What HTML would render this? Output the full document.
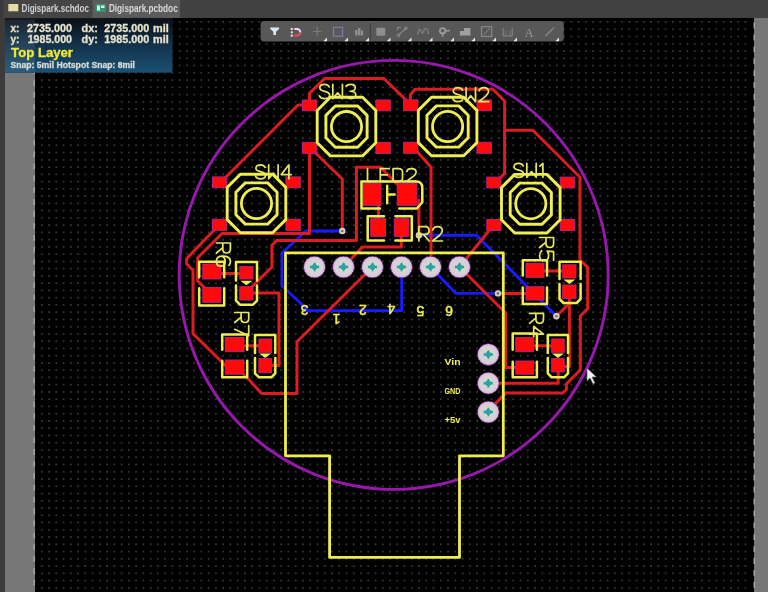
<!DOCTYPE html>
<html><head><meta charset="utf-8">
<style>
html,body{margin:0;padding:0;width:768px;height:592px;overflow:hidden;background:#000;}
svg{position:absolute;left:0;top:0;filter:blur(0.45px);}
text{font-family:"Liberation Sans",sans-serif;}
</style></head><body>
<svg width="768" height="592" viewBox="0 0 768 592">
  <defs>
    <pattern id="dots" patternUnits="userSpaceOnUse" x="38.17" y="18.37" width="7.254" height="7.254">
      <rect x="2.8" y="2.8" width="1.7" height="1.7" fill="#3a3a3a"/>
    </pattern>
    <linearGradient id="ig" x1="0" y1="0" x2="0" y2="1">
      <stop offset="0" stop-color="#0a0f16"/>
      <stop offset="0.45" stop-color="#123048"/>
      <stop offset="1" stop-color="#1c5072"/>
    </linearGradient>
  </defs>
  <!-- top bar -->
  <rect x="0" y="0" width="768" height="18" fill="#414141"/>
  <rect x="0" y="0" width="92" height="18" fill="#454545"/>
  <rect x="92.5" y="0" width="87.5" height="17.8" fill="#5c5c5c"/>
  <rect x="0" y="0" width="3.5" height="18" fill="#3a3a3a"/>
  <rect x="8.3" y="4" width="10" height="7.3" fill="#e8dca4"/>
  <rect x="95.6" y="4" width="10.2" height="8" fill="#2f9670"/>
  <rect x="97" y="5.5" width="3" height="5" fill="#d8efe4"/>
  <rect x="101" y="5.5" width="3.5" height="2.5" fill="#d8efe4"/>
  <text x="21.6" y="11.5" font-size="10.5" font-weight="700" fill="#d0d0d0" textLength="67.4" lengthAdjust="spacingAndGlyphs">Digispark.schdoc</text>
  <text x="108.9" y="11.5" font-size="10.5" font-weight="700" fill="#dadada" textLength="68.8" lengthAdjust="spacingAndGlyphs">Digispark.pcbdoc</text>
  <!-- strips -->
  <rect x="0" y="18" width="5" height="574" fill="#3b3b3b"/>
  <rect x="5" y="18" width="30" height="574" fill="#777"/>
  <rect x="754" y="18" width="14" height="574" fill="#777"/>
  <!-- canvas -->
  <rect x="35" y="18" width="719" height="574" fill="#000"/>
  <rect x="35" y="18" width="715" height="574" fill="url(#dots)"/>
  <line x1="34.2" y1="18" x2="34.2" y2="592" stroke="#a4a4a4" stroke-width="1.6" stroke-dasharray="5.8 6.1" stroke-dashoffset="-2.7"/>
  <line x1="754.3" y1="18" x2="754.3" y2="592" stroke="#a4a4a4" stroke-width="1.6" stroke-dasharray="5.8 6.1" stroke-dashoffset="-4.6"/>
  <g id="pcb">
<circle cx="393.7" cy="274.9" r="214.5" fill="none" stroke="#9818ae" stroke-width="2.9"/>
<path d="M342.3,231.0 L306.0,231.0 L282.0,253.0 L282.0,286.0 L302.5,305.0 L307.0,310.6 L401.7,310.6 L401.7,270.0" fill="none" stroke="#1a1aff" stroke-width="2.9" stroke-linejoin="round" stroke-linecap="round"/>
<path d="M418.9,235.2 L476.5,235.2 L556.4,316.2" fill="none" stroke="#1a1aff" stroke-width="2.9" stroke-linejoin="round" stroke-linecap="round"/>
<path d="M430.5,267.0 L456.0,293.4 L498.0,293.4" fill="none" stroke="#1a1aff" stroke-width="2.9" stroke-linejoin="round" stroke-linecap="round"/>
<path d="M309.5,100.0 L309.5,93.4 L324.5,78.5 L383.9,78.5 L407.0,101.0" fill="none" stroke="#dc1c20" stroke-width="3.0" stroke-linejoin="round" stroke-linecap="round"/>
<path d="M303.0,105.0 L298.0,105.0 L226.0,177.0 L220.0,182.0" fill="none" stroke="#dc1c20" stroke-width="3.0" stroke-linejoin="round" stroke-linecap="round"/>
<path d="M410.3,102.0 L410.3,95.0 L415.0,89.3 L492.8,89.3 L504.6,101.0 L504.6,173.4 L497.0,181.0" fill="none" stroke="#dc1c20" stroke-width="3.0" stroke-linejoin="round" stroke-linecap="round"/>
<path d="M504.6,130.2 L532.9,130.2 L580.0,177.3 L580.0,260.0 L587.7,267.2 L587.7,308.6 L580.3,316.0 L580.3,370.0 L566.4,383.9 L566.4,389.5 L563.0,392.9 L506.0,392.9 L494.0,405.0" fill="none" stroke="#dc1c20" stroke-width="3.0" stroke-linejoin="round" stroke-linecap="round"/>
<path d="M493.7,225.0 L459.5,267.0" fill="none" stroke="#dc1c20" stroke-width="3.0" stroke-linejoin="round" stroke-linecap="round"/>
<path d="M459.5,267.0 L501.6,309.0 L505.6,313.0 L505.6,367.5 L520.0,367.5" fill="none" stroke="#dc1c20" stroke-width="3.0" stroke-linejoin="round" stroke-linecap="round"/>
<path d="M498.0,293.4 L530.0,293.4" fill="none" stroke="#dc1c20" stroke-width="3.0" stroke-linejoin="round" stroke-linecap="round"/>
<path d="M540.0,271.0 L566.0,271.0" fill="none" stroke="#dc1c20" stroke-width="3.0" stroke-linejoin="round" stroke-linecap="round"/>
<path d="M530.0,345.8 L556.0,345.8" fill="none" stroke="#dc1c20" stroke-width="3.0" stroke-linejoin="round" stroke-linecap="round"/>
<path d="M569.4,292.0 L569.4,303.2 L556.4,316.2" fill="none" stroke="#dc1c20" stroke-width="3.0" stroke-linejoin="round" stroke-linecap="round"/>
<path d="M569.4,303.2 L569.4,366.4 L562.0,366.4" fill="none" stroke="#dc1c20" stroke-width="3.0" stroke-linejoin="round" stroke-linecap="round"/>
<path d="M558.2,366.0 L558.2,383.3 L488.3,383.3" fill="none" stroke="#dc1c20" stroke-width="3.0" stroke-linejoin="round" stroke-linecap="round"/>
<path d="M418.9,200.0 L418.9,235.2" fill="none" stroke="#dc1c20" stroke-width="3.0" stroke-linejoin="round" stroke-linecap="round"/>
<path d="M405.0,192.0 L380.4,167.2 L356.4,167.2 L356.4,240.6 L276.6,240.6 L271.9,245.3 L271.9,267.0 L250.0,289.0" fill="none" stroke="#dc1c20" stroke-width="3.0" stroke-linejoin="round" stroke-linecap="round"/>
<path d="M309.5,150.0 L309.5,233.6 L221.9,233.6 L197.7,257.8 L197.7,281.0 L210.0,293.0" fill="none" stroke="#dc1c20" stroke-width="3.0" stroke-linejoin="round" stroke-linecap="round"/>
<path d="M314.5,152.0 L342.3,179.0 L342.3,231.0" fill="none" stroke="#dc1c20" stroke-width="3.0" stroke-linejoin="round" stroke-linecap="round"/>
<path d="M219.0,225.0 L186.7,258.6 L186.7,264.0 L193.0,270.3 L193.0,333.6 L228.0,368.0" fill="none" stroke="#dc1c20" stroke-width="3.0" stroke-linejoin="round" stroke-linecap="round"/>
<path d="M215.0,273.4 L245.0,273.4" fill="none" stroke="#dc1c20" stroke-width="3.0" stroke-linejoin="round" stroke-linecap="round"/>
<path d="M250.0,293.0 L279.0,293.0 L279.0,365.6 L266.0,365.6" fill="none" stroke="#dc1c20" stroke-width="3.0" stroke-linejoin="round" stroke-linecap="round"/>
<path d="M240.0,345.8 L264.0,345.8" fill="none" stroke="#dc1c20" stroke-width="3.0" stroke-linejoin="round" stroke-linecap="round"/>
<path d="M235.0,366.0 L247.4,378.0 L261.6,393.4 L297.0,393.4 L297.0,341.7 L372.5,267.0" fill="none" stroke="#dc1c20" stroke-width="3.0" stroke-linejoin="round" stroke-linecap="round"/>
<path d="M343.5,267.0 L362.6,246.9 L401.3,246.9 L401.3,228.0" fill="none" stroke="#dc1c20" stroke-width="3.0" stroke-linejoin="round" stroke-linecap="round"/>
<path d="M414.0,148.0 L431.0,167.2 L431.0,267.0" fill="none" stroke="#dc1c20" stroke-width="3.0" stroke-linejoin="round" stroke-linecap="round"/>
<path d="M378.4,200.0 L378.4,225.0" fill="none" stroke="#dc1c20" stroke-width="3.0" stroke-linejoin="round" stroke-linecap="round"/>
<path d="M285.5,252.8 L503.3,252.8 L503.3,455.8 L459.5,455.8 L459.5,557.4 L329.6,557.4 L329.6,455.8 L285.5,455.8Z" fill="none" stroke="#eeee50" stroke-width="2.8" stroke-linejoin="round" stroke-linecap="round"/>
<rect x="302.5" y="100.0" width="14.2" height="10.8" fill="#ff0a0a" stroke="#b82080" stroke-width="1"/>
<rect x="375.9" y="100.0" width="14.4" height="10.8" fill="#ff0a0a" stroke="#b82080" stroke-width="1"/>
<rect x="302.5" y="142.4" width="14.2" height="11.0" fill="#ff0a0a" stroke="#b82080" stroke-width="1"/>
<rect x="375.9" y="142.4" width="14.4" height="11.0" fill="#ff0a0a" stroke="#b82080" stroke-width="1"/>
<rect x="403.6" y="99.9" width="14.2" height="10.8" fill="#ff0a0a" stroke="#b82080" stroke-width="1"/>
<rect x="477.0" y="99.9" width="14.4" height="10.8" fill="#ff0a0a" stroke="#b82080" stroke-width="1"/>
<rect x="403.6" y="142.3" width="14.2" height="11.0" fill="#ff0a0a" stroke="#b82080" stroke-width="1"/>
<rect x="477.0" y="142.3" width="14.4" height="11.0" fill="#ff0a0a" stroke="#b82080" stroke-width="1"/>
<rect x="486.8" y="177.1" width="14.2" height="10.8" fill="#ff0a0a" stroke="#b82080" stroke-width="1"/>
<rect x="560.2" y="177.1" width="14.4" height="10.8" fill="#ff0a0a" stroke="#b82080" stroke-width="1"/>
<rect x="486.8" y="219.5" width="14.2" height="11.0" fill="#ff0a0a" stroke="#b82080" stroke-width="1"/>
<rect x="560.2" y="219.5" width="14.4" height="11.0" fill="#ff0a0a" stroke="#b82080" stroke-width="1"/>
<rect x="212.5" y="176.9" width="14.2" height="10.8" fill="#ff0a0a" stroke="#b82080" stroke-width="1"/>
<rect x="285.9" y="176.9" width="14.4" height="10.8" fill="#ff0a0a" stroke="#b82080" stroke-width="1"/>
<rect x="212.5" y="219.3" width="14.2" height="11.0" fill="#ff0a0a" stroke="#b82080" stroke-width="1"/>
<rect x="285.9" y="219.3" width="14.4" height="11.0" fill="#ff0a0a" stroke="#b82080" stroke-width="1"/>
<path d="M330.4,97.3 L362.6,97.3 L375.8,110.5 L375.8,142.7 L362.6,155.9 L330.4,155.9 L317.2,142.7 L317.2,110.5Z" fill="none" stroke="#eeee50" stroke-width="2.9" stroke-linejoin="round" stroke-linecap="round"/>
<path d="M335.3,106.0 L357.7,106.0 L367.1,115.4 L367.1,137.8 L357.7,147.2 L335.3,147.2 L325.9,137.8 L325.9,115.4Z" fill="none" stroke="#eeee50" stroke-width="2.9" stroke-linejoin="round" stroke-linecap="round"/>
<circle cx="346.5" cy="126.6" r="15.1" fill="none" stroke="#eeee50" stroke-width="2.8"/>
<path d="M431.5,97.2 L463.7,97.2 L476.9,110.4 L476.9,142.6 L463.7,155.8 L431.5,155.8 L418.3,142.6 L418.3,110.4Z" fill="none" stroke="#eeee50" stroke-width="2.9" stroke-linejoin="round" stroke-linecap="round"/>
<path d="M436.4,105.9 L458.8,105.9 L468.2,115.3 L468.2,137.7 L458.8,147.1 L436.4,147.1 L427.0,137.7 L427.0,115.3Z" fill="none" stroke="#eeee50" stroke-width="2.9" stroke-linejoin="round" stroke-linecap="round"/>
<circle cx="447.6" cy="126.5" r="15.1" fill="none" stroke="#eeee50" stroke-width="2.8"/>
<path d="M514.7,174.4 L546.9,174.4 L560.1,187.6 L560.1,219.8 L546.9,233.0 L514.7,233.0 L501.5,219.8 L501.5,187.6Z" fill="none" stroke="#eeee50" stroke-width="2.9" stroke-linejoin="round" stroke-linecap="round"/>
<path d="M519.6,183.1 L542.0,183.1 L551.4,192.5 L551.4,214.9 L542.0,224.3 L519.6,224.3 L510.2,214.9 L510.2,192.5Z" fill="none" stroke="#eeee50" stroke-width="2.9" stroke-linejoin="round" stroke-linecap="round"/>
<circle cx="530.8" cy="203.7" r="15.1" fill="none" stroke="#eeee50" stroke-width="2.8"/>
<path d="M240.4,174.2 L272.6,174.2 L285.8,187.4 L285.8,219.6 L272.6,232.8 L240.4,232.8 L227.2,219.6 L227.2,187.4Z" fill="none" stroke="#eeee50" stroke-width="2.9" stroke-linejoin="round" stroke-linecap="round"/>
<path d="M245.3,182.9 L267.7,182.9 L277.1,192.3 L277.1,214.7 L267.7,224.1 L245.3,224.1 L235.9,214.7 L235.9,192.3Z" fill="none" stroke="#eeee50" stroke-width="2.9" stroke-linejoin="round" stroke-linecap="round"/>
<circle cx="256.5" cy="203.5" r="15.1" fill="none" stroke="#eeee50" stroke-width="2.8"/>
<rect x="363.5" y="183.6" width="17.5" height="21.7" fill="#ff0a0a" stroke="#b82080" stroke-width="1"/>
<rect x="397.3" y="183.6" width="19.6" height="21.7" fill="#ff0a0a" stroke="#b82080" stroke-width="1"/>
<path d="M380,208.5 L361.5,208.5 L361.5,181.6 L416,181.6 Q422.3,181.6 422.3,188 L422.3,202.3 L416.9,208.5 L399.3,208.5" fill="none" stroke="#eeee50" stroke-width="2.5" stroke-linejoin="round" stroke-linecap="round"/>
<path d="M387.2,185.7 L387.2,203.2" fill="none" stroke="#eeee50" stroke-width="2.4" stroke-linejoin="round" stroke-linecap="round"/>
<path d="M387.2,194.5 L394.6,194.5" fill="none" stroke="#eeee50" stroke-width="2.5" stroke-linejoin="round" stroke-linecap="round"/>
<rect x="370.8" y="218.7" width="14.7" height="17.6" fill="#ff0a0a" stroke="#b82080" stroke-width="1"/>
<rect x="394.3" y="218.7" width="14.6" height="17.6" fill="#ff0a0a" stroke="#b82080" stroke-width="1"/>
<path d="M384.0,216.2 L367.7,216.2 L367.7,240.4 L384.0,240.4" fill="none" stroke="#eeee50" stroke-width="2.5" stroke-linejoin="round" stroke-linecap="round"/>
<path d="M395.4,216.2 L411.8,216.2 L411.8,240.4 L395.4,240.4" fill="none" stroke="#eeee50" stroke-width="2.5" stroke-linejoin="round" stroke-linecap="round"/>
<rect x="202.8" y="264.0" width="18.2" height="15.0" fill="#ff0a0a" stroke="#b82080" stroke-width="1"/>
<rect x="202.8" y="287.5" width="18.2" height="14.8" fill="#ff0a0a" stroke="#b82080" stroke-width="1"/>
<path d="M199.2,277.2 L199.2,261.7 L224.2,261.7 L224.2,277.2" fill="none" stroke="#eeee50" stroke-width="2.5" stroke-linejoin="round" stroke-linecap="round"/>
<path d="M199.2,288.3 L199.2,305.5 L224.2,305.5 L224.2,288.3" fill="none" stroke="#eeee50" stroke-width="2.5" stroke-linejoin="round" stroke-linecap="round"/>
<rect x="239.8" y="266.4" width="13.2" height="12.6" fill="#ff0a0a" stroke="#b82080" stroke-width="1"/>
<rect x="239.8" y="286.7" width="13.2" height="13.3" fill="#ff0a0a" stroke="#b82080" stroke-width="1"/>
<path d="M236.0,280.4 L236.0,262.0 L257.0,262.0 L257.0,280.4" fill="none" stroke="#eeee50" stroke-width="2.5" stroke-linejoin="round" stroke-linecap="round"/>
<path d="M236.0,285.4 L236.0,300.7 L240.0,304.7 L253.0,304.7 L257.0,300.7 L257.0,285.4" fill="none" stroke="#eeee50" stroke-width="2.5" stroke-linejoin="round" stroke-linecap="round"/>
<path d="M240.4,280.85 L252.4,280.85 L246.4,285.35Z" fill="#eeee50"/>
<rect x="225.3" y="337.5" width="18.7" height="14.1" fill="#ff0a0a" stroke="#b82080" stroke-width="1"/>
<rect x="225.3" y="360.0" width="18.7" height="14.2" fill="#ff0a0a" stroke="#b82080" stroke-width="1"/>
<path d="M222.2,349.8 L222.2,334.4 L247.2,334.4 L247.2,349.8" fill="none" stroke="#eeee50" stroke-width="2.5" stroke-linejoin="round" stroke-linecap="round"/>
<path d="M222.2,360.8 L222.2,377.3 L247.2,377.3 L247.2,360.8" fill="none" stroke="#eeee50" stroke-width="2.5" stroke-linejoin="round" stroke-linecap="round"/>
<rect x="258.9" y="339.0" width="12.5" height="13.3" fill="#ff0a0a" stroke="#b82080" stroke-width="1"/>
<rect x="258.9" y="358.6" width="12.5" height="14.1" fill="#ff0a0a" stroke="#b82080" stroke-width="1"/>
<path d="M255.0,353.0 L255.0,335.0 L275.3,335.0 L275.3,353.0" fill="none" stroke="#eeee50" stroke-width="2.5" stroke-linejoin="round" stroke-linecap="round"/>
<path d="M255.0,358.0 L255.0,373.3 L259.0,377.3 L271.3,377.3 L275.3,373.3 L275.3,358.0" fill="none" stroke="#eeee50" stroke-width="2.5" stroke-linejoin="round" stroke-linecap="round"/>
<path d="M259.15,353.45000000000005 L271.15,353.45000000000005 L265.15,357.95000000000005Z" fill="#eeee50"/>
<rect x="526.0" y="263.3" width="18.0" height="14.0" fill="#ff0a0a" stroke="#b82080" stroke-width="1"/>
<rect x="526.0" y="286.7" width="18.0" height="13.3" fill="#ff0a0a" stroke="#b82080" stroke-width="1"/>
<path d="M522.8,275.5 L522.8,260.2 L547.0,260.2 L547.0,275.5" fill="none" stroke="#eeee50" stroke-width="2.5" stroke-linejoin="round" stroke-linecap="round"/>
<path d="M522.8,287.5 L522.8,304.0 L547.0,304.0 L547.0,287.5" fill="none" stroke="#eeee50" stroke-width="2.5" stroke-linejoin="round" stroke-linecap="round"/>
<rect x="562.7" y="264.8" width="13.3" height="13.2" fill="#ff0a0a" stroke="#b82080" stroke-width="1"/>
<rect x="562.7" y="285.0" width="13.3" height="13.4" fill="#ff0a0a" stroke="#b82080" stroke-width="1"/>
<path d="M559.5,279.0 L559.5,261.7 L580.6,261.7 L580.6,279.0" fill="none" stroke="#eeee50" stroke-width="2.5" stroke-linejoin="round" stroke-linecap="round"/>
<path d="M559.5,284.0 L559.5,299.0 L563.5,303.0 L576.6,303.0 L580.6,299.0 L580.6,284.0" fill="none" stroke="#eeee50" stroke-width="2.5" stroke-linejoin="round" stroke-linecap="round"/>
<path d="M563.35,279.5 L575.35,279.5 L569.35,284.0Z" fill="#eeee50"/>
<rect x="515.8" y="337.5" width="17.9" height="14.1" fill="#ff0a0a" stroke="#b82080" stroke-width="1"/>
<rect x="515.8" y="361.0" width="17.9" height="13.2" fill="#ff0a0a" stroke="#b82080" stroke-width="1"/>
<path d="M512.7,349.8 L512.7,333.6 L536.9,333.6 L536.9,349.8" fill="none" stroke="#eeee50" stroke-width="2.5" stroke-linejoin="round" stroke-linecap="round"/>
<path d="M512.7,361.8 L512.7,377.3 L536.9,377.3 L536.9,361.8" fill="none" stroke="#eeee50" stroke-width="2.5" stroke-linejoin="round" stroke-linecap="round"/>
<rect x="551.7" y="339.0" width="12.5" height="13.3" fill="#ff0a0a" stroke="#b82080" stroke-width="1"/>
<rect x="551.7" y="358.6" width="12.5" height="13.3" fill="#ff0a0a" stroke="#b82080" stroke-width="1"/>
<path d="M547.8,353.0 L547.8,335.0 L568.0,335.0 L568.0,353.0" fill="none" stroke="#eeee50" stroke-width="2.5" stroke-linejoin="round" stroke-linecap="round"/>
<path d="M547.8,358.0 L547.8,373.3 L551.8,377.3 L564.0,377.3 L568.0,373.3 L568.0,358.0" fill="none" stroke="#eeee50" stroke-width="2.5" stroke-linejoin="round" stroke-linecap="round"/>
<path d="M551.95,353.45000000000005 L563.95,353.45000000000005 L557.95,357.95000000000005Z" fill="#eeee50"/>
<circle cx="314.5" cy="267" r="10.8" fill="#d6d2d6" stroke="#6a1078" stroke-width="0.9"/>
<circle cx="314.5" cy="267" r="9.6" fill="none" stroke="#d8bede" stroke-width="1.5"/>
<path d="M309.9,267 L319.1,267 M314.5,262.8 L314.5,271.2" stroke="#28a0a0" stroke-width="2.6"/>
<circle cx="314.5" cy="267" r="2.8" fill="#28a4a2"/>
<path d="M312.0,263 h2 M315.5,263 h2 M312.0,270.6 h2 M315.5,270.6 h2" stroke="#e8e8b0" stroke-width="1" opacity="0.8"/>
<circle cx="343.5" cy="267" r="10.8" fill="#d6d2d6" stroke="#6a1078" stroke-width="0.9"/>
<circle cx="343.5" cy="267" r="9.6" fill="none" stroke="#d8bede" stroke-width="1.5"/>
<path d="M338.9,267 L348.1,267 M343.5,262.8 L343.5,271.2" stroke="#28a0a0" stroke-width="2.6"/>
<circle cx="343.5" cy="267" r="2.8" fill="#28a4a2"/>
<path d="M341.0,263 h2 M344.5,263 h2 M341.0,270.6 h2 M344.5,270.6 h2" stroke="#e8e8b0" stroke-width="1" opacity="0.8"/>
<circle cx="372.5" cy="267" r="10.8" fill="#d6d2d6" stroke="#6a1078" stroke-width="0.9"/>
<circle cx="372.5" cy="267" r="9.6" fill="none" stroke="#d8bede" stroke-width="1.5"/>
<path d="M367.9,267 L377.1,267 M372.5,262.8 L372.5,271.2" stroke="#28a0a0" stroke-width="2.6"/>
<circle cx="372.5" cy="267" r="2.8" fill="#28a4a2"/>
<path d="M370.0,263 h2 M373.5,263 h2 M370.0,270.6 h2 M373.5,270.6 h2" stroke="#e8e8b0" stroke-width="1" opacity="0.8"/>
<circle cx="401.5" cy="267" r="10.8" fill="#d6d2d6" stroke="#6a1078" stroke-width="0.9"/>
<circle cx="401.5" cy="267" r="9.6" fill="none" stroke="#d8bede" stroke-width="1.5"/>
<path d="M396.9,267 L406.1,267 M401.5,262.8 L401.5,271.2" stroke="#28a0a0" stroke-width="2.6"/>
<circle cx="401.5" cy="267" r="2.8" fill="#28a4a2"/>
<path d="M399.0,263 h2 M402.5,263 h2 M399.0,270.6 h2 M402.5,270.6 h2" stroke="#e8e8b0" stroke-width="1" opacity="0.8"/>
<circle cx="430.5" cy="267" r="10.8" fill="#d6d2d6" stroke="#6a1078" stroke-width="0.9"/>
<circle cx="430.5" cy="267" r="9.6" fill="none" stroke="#d8bede" stroke-width="1.5"/>
<path d="M425.9,267 L435.1,267 M430.5,262.8 L430.5,271.2" stroke="#28a0a0" stroke-width="2.6"/>
<circle cx="430.5" cy="267" r="2.8" fill="#28a4a2"/>
<path d="M428.0,263 h2 M431.5,263 h2 M428.0,270.6 h2 M431.5,270.6 h2" stroke="#e8e8b0" stroke-width="1" opacity="0.8"/>
<circle cx="459.5" cy="267" r="10.8" fill="#d6d2d6" stroke="#6a1078" stroke-width="0.9"/>
<circle cx="459.5" cy="267" r="9.6" fill="none" stroke="#d8bede" stroke-width="1.5"/>
<path d="M454.9,267 L464.1,267 M459.5,262.8 L459.5,271.2" stroke="#28a0a0" stroke-width="2.6"/>
<circle cx="459.5" cy="267" r="2.8" fill="#28a4a2"/>
<path d="M457.0,263 h2 M460.5,263 h2 M457.0,270.6 h2 M460.5,270.6 h2" stroke="#e8e8b0" stroke-width="1" opacity="0.8"/>
<circle cx="488.3" cy="354.5" r="10.8" fill="#d6d2d6" stroke="#6a1078" stroke-width="0.9"/>
<circle cx="488.3" cy="354.5" r="9.6" fill="none" stroke="#d8bede" stroke-width="1.5"/>
<path d="M483.7,354.5 L492.90000000000003,354.5 M488.3,350.3 L488.3,358.7" stroke="#28a0a0" stroke-width="2.6"/>
<circle cx="488.3" cy="354.5" r="2.8" fill="#28a4a2"/>
<path d="M485.8,350.5 h2 M489.3,350.5 h2 M485.8,358.1 h2 M489.3,358.1 h2" stroke="#e8e8b0" stroke-width="1" opacity="0.8"/>
<circle cx="488.3" cy="383.2" r="10.8" fill="#d6d2d6" stroke="#6a1078" stroke-width="0.9"/>
<circle cx="488.3" cy="383.2" r="9.6" fill="none" stroke="#d8bede" stroke-width="1.5"/>
<path d="M483.7,383.2 L492.90000000000003,383.2 M488.3,379.0 L488.3,387.4" stroke="#28a0a0" stroke-width="2.6"/>
<circle cx="488.3" cy="383.2" r="2.8" fill="#28a4a2"/>
<path d="M485.8,379.2 h2 M489.3,379.2 h2 M485.8,386.8 h2 M489.3,386.8 h2" stroke="#e8e8b0" stroke-width="1" opacity="0.8"/>
<circle cx="488.3" cy="412" r="10.8" fill="#d6d2d6" stroke="#6a1078" stroke-width="0.9"/>
<circle cx="488.3" cy="412" r="9.6" fill="none" stroke="#d8bede" stroke-width="1.5"/>
<path d="M483.7,412 L492.90000000000003,412 M488.3,407.8 L488.3,416.2" stroke="#28a0a0" stroke-width="2.6"/>
<circle cx="488.3" cy="412" r="2.8" fill="#28a4a2"/>
<path d="M485.8,408 h2 M489.3,408 h2 M485.8,415.6 h2 M489.3,415.6 h2" stroke="#e8e8b0" stroke-width="1" opacity="0.8"/>
<circle cx="342.3" cy="231" r="3.2" fill="#d8d0c4"/>
<circle cx="342.3" cy="231" r="1.3" fill="#7a6e5a"/>
<circle cx="418.9" cy="235.2" r="3.2" fill="#d8d0c4"/>
<circle cx="418.9" cy="235.2" r="1.3" fill="#7a6e5a"/>
<circle cx="498" cy="293.4" r="3.2" fill="#d8d0c4"/>
<circle cx="498" cy="293.4" r="1.3" fill="#7a6e5a"/>
<circle cx="556.4" cy="316.2" r="3.2" fill="#d8d0c4"/>
<circle cx="556.4" cy="316.2" r="1.3" fill="#7a6e5a"/>
<g transform="translate(319.40,84.30) scale(1.0214,1.0214)" fill="none" stroke="#e8e860" stroke-width="1.700" stroke-linecap="round" stroke-linejoin="round"><path vector-effect="non-scaling-stroke" transform="translate(0.00,0)" d="M9.6,2.6 C8.8,0.9 7.2,0 5,0 C2.2,0 0.4,1.4 0.4,3.5 C0.4,5.6 2.2,6.3 5,6.9 C8,7.5 10,8.5 10,10.7 C10,12.8 8,14 5,14 C2.6,14 0.9,13.1 0,11.3"/><path vector-effect="non-scaling-stroke" transform="translate(13.13,0)" d="M0,0 L0,14 L4.7,8.3 L9.4,14 L9.4,0"/><path vector-effect="non-scaling-stroke" transform="translate(25.67,0)" d="M0.3,1.8 C1.3,0.6 3,0 5,0 C7.8,0 9.5,1.5 9.5,3.4 C9.5,5.5 7.8,6.8 4.4,6.8 C8,6.8 10,8.2 10,10.4 C10,12.6 8,14 5,14 C2.8,14 1,13.3 0,12"/></g>
<g transform="translate(452.90,87.60) scale(1.0000,1.0000)" fill="none" stroke="#e8e860" stroke-width="1.700" stroke-linecap="round" stroke-linejoin="round"><path vector-effect="non-scaling-stroke" transform="translate(0.00,0)" d="M9.6,2.6 C8.8,0.9 7.2,0 5,0 C2.2,0 0.4,1.4 0.4,3.5 C0.4,5.6 2.2,6.3 5,6.9 C8,7.5 10,8.5 10,10.7 C10,12.8 8,14 5,14 C2.6,14 0.9,13.1 0,11.3"/><path vector-effect="non-scaling-stroke" transform="translate(13.20,0)" d="M0,0 L0,14 L4.7,8.3 L9.4,14 L9.4,0"/><path vector-effect="non-scaling-stroke" transform="translate(25.80,0)" d="M0.4,3.2 C1,1.1 2.8,0 5,0 C7.8,0 9.8,1.6 9.8,4 C9.8,5.8 8.8,7 7,8.6 L0.2,14 L10,14"/></g>
<g transform="translate(513.60,163.30) scale(1.0000,1.0000)" fill="none" stroke="#e8e860" stroke-width="1.700" stroke-linecap="round" stroke-linejoin="round"><path vector-effect="non-scaling-stroke" transform="translate(0.00,0)" d="M9.6,2.6 C8.8,0.9 7.2,0 5,0 C2.2,0 0.4,1.4 0.4,3.5 C0.4,5.6 2.2,6.3 5,6.9 C8,7.5 10,8.5 10,10.7 C10,12.8 8,14 5,14 C2.6,14 0.9,13.1 0,11.3"/><path vector-effect="non-scaling-stroke" transform="translate(13.20,0)" d="M0,0 L0,14 L4.7,8.3 L9.4,14 L9.4,0"/><path vector-effect="non-scaling-stroke" transform="translate(25.80,0)" d="M0.5,2.8 L3.5,0 L3.5,14"/></g>
<g transform="translate(255.50,164.80) scale(1.0000,1.0000)" fill="none" stroke="#e8e860" stroke-width="1.700" stroke-linecap="round" stroke-linejoin="round"><path vector-effect="non-scaling-stroke" transform="translate(0.00,0)" d="M9.6,2.6 C8.8,0.9 7.2,0 5,0 C2.2,0 0.4,1.4 0.4,3.5 C0.4,5.6 2.2,6.3 5,6.9 C8,7.5 10,8.5 10,10.7 C10,12.8 8,14 5,14 C2.6,14 0.9,13.1 0,11.3"/><path vector-effect="non-scaling-stroke" transform="translate(13.20,0)" d="M0,0 L0,14 L4.7,8.3 L9.4,14 L9.4,0"/><path vector-effect="non-scaling-stroke" transform="translate(25.80,0)" d="M7.6,14 L7.6,0 L0,9.8 L10,9.8"/></g>
<g transform="translate(367.50,168.60) scale(0.9979,0.9071)" fill="none" stroke="#e8e860" stroke-width="1.700" stroke-linecap="round" stroke-linejoin="round"><path vector-effect="non-scaling-stroke" transform="translate(0.00,0)" d="M0,0 L0,14 L9,14"/><path vector-effect="non-scaling-stroke" transform="translate(12.81,0)" d="M9,0 L0,0 L0,14 L9,14 M0,7 L7,7"/><path vector-effect="non-scaling-stroke" transform="translate(25.62,0)" d="M0,0 L0,14 L5.5,14 C8.2,14 9.5,12.5 9.5,10 L9.5,4 C9.5,1.5 8.2,0 5.5,0 Z"/><path vector-effect="non-scaling-stroke" transform="translate(38.92,0)" d="M0.4,3.2 C1,1.1 2.8,0 5,0 C7.8,0 9.8,1.6 9.8,4 C9.8,5.8 8.8,7 7,8.6 L0.2,14 L10,14"/></g>
<g transform="translate(418.90,226.70) scale(1.0214,1.0214)" fill="none" stroke="#e8e860" stroke-width="1.700" stroke-linecap="round" stroke-linejoin="round"><path vector-effect="non-scaling-stroke" transform="translate(0.00,0)" d="M0,14 L0,0 L6,0 C8.6,0 10,1.6 10,3.8 C10,6 8.6,7.6 6,7.6 L0,7.6 M4.6,7.6 L10,14"/><path vector-effect="non-scaling-stroke" transform="translate(13.13,0)" d="M0.4,3.2 C1,1.1 2.8,0 5,0 C7.8,0 9.8,1.6 9.8,4 C9.8,5.8 8.8,7 7,8.6 L0.2,14 L10,14"/></g>
<g transform="translate(230.40,243.00) rotate(90) scale(1.0000,1.0000)" fill="none" stroke="#e8e860" stroke-width="1.700" stroke-linecap="round" stroke-linejoin="round"><path vector-effect="non-scaling-stroke" transform="translate(0.00,0)" d="M0,14 L0,0 L6,0 C8.6,0 10,1.6 10,3.8 C10,6 8.6,7.6 6,7.6 L0,7.6 M4.6,7.6 L10,14"/><path vector-effect="non-scaling-stroke" transform="translate(13.20,0)" d="M9.2,1.4 C8.3,0.5 6.8,0 5,0 C1.8,0 0,3.2 0,7.8 C0,12 2,14 5,14 C8,14 10,12.1 10,9.5 C10,6.8 8,5.2 5,5.2 C2.6,5.2 0.8,6.4 0,8.4"/></g>
<g transform="translate(248.70,312.50) rotate(90) scale(1.0000,1.0000)" fill="none" stroke="#e8e860" stroke-width="1.700" stroke-linecap="round" stroke-linejoin="round"><path vector-effect="non-scaling-stroke" transform="translate(0.00,0)" d="M0,14 L0,0 L6,0 C8.6,0 10,1.6 10,3.8 C10,6 8.6,7.6 6,7.6 L0,7.6 M4.6,7.6 L10,14"/><path vector-effect="non-scaling-stroke" transform="translate(13.20,0)" d="M0,0 L10,0 L3.6,14"/></g>
<g transform="translate(553.60,237.50) rotate(90) scale(1.0000,1.0000)" fill="none" stroke="#e8e860" stroke-width="1.700" stroke-linecap="round" stroke-linejoin="round"><path vector-effect="non-scaling-stroke" transform="translate(0.00,0)" d="M0,14 L0,0 L6,0 C8.6,0 10,1.6 10,3.8 C10,6 8.6,7.6 6,7.6 L0,7.6 M4.6,7.6 L10,14"/><path vector-effect="non-scaling-stroke" transform="translate(13.20,0)" d="M9.5,0 L1,0 L0.4,6.4 C1.6,5.4 3.2,5 5,5 C8,5 10,6.8 10,9.5 C10,12.3 8,14 5,14 C2.8,14 1,13.3 0,11.8"/></g>
<g transform="translate(543.50,313.30) rotate(90) scale(1.0000,1.0000)" fill="none" stroke="#e8e860" stroke-width="1.700" stroke-linecap="round" stroke-linejoin="round"><path vector-effect="non-scaling-stroke" transform="translate(0.00,0)" d="M0,14 L0,0 L6,0 C8.6,0 10,1.6 10,3.8 C10,6 8.6,7.6 6,7.6 L0,7.6 M4.6,7.6 L10,14"/><path vector-effect="non-scaling-stroke" transform="translate(13.20,0)" d="M7.6,14 L7.6,0 L0,9.8 L10,9.8"/></g>
<text x="304.59999999999997" y="315.6" font-size="14" font-weight="400" stroke="#eeee50" stroke-width="0.5" fill="#eeee50" font-family="Liberation Sans" text-anchor="middle" transform="rotate(180 304.59999999999997 310.5)">3</text>
<text x="336.5" y="324.40000000000003" font-size="14" font-weight="400" stroke="#eeee50" stroke-width="0.5" fill="#eeee50" font-family="Liberation Sans" text-anchor="middle" transform="rotate(180 336.5 319.3)">1</text>
<text x="362.9" y="315.6" font-size="14" font-weight="400" stroke="#eeee50" stroke-width="0.5" fill="#eeee50" font-family="Liberation Sans" text-anchor="middle" transform="rotate(180 362.9 310.5)">2</text>
<text x="391.29999999999995" y="314.20000000000005" font-size="14" font-weight="400" stroke="#eeee50" stroke-width="0.5" fill="#eeee50" font-family="Liberation Sans" text-anchor="middle" transform="rotate(180 391.29999999999995 309.1)">4</text>
<text x="420.29999999999995" y="316.20000000000005" font-size="14" font-weight="400" stroke="#eeee50" stroke-width="0.5" fill="#eeee50" font-family="Liberation Sans" text-anchor="middle" transform="rotate(180 420.29999999999995 311.1)">5</text>
<text x="449.2" y="316.20000000000005" font-size="14" font-weight="400" stroke="#eeee50" stroke-width="0.5" fill="#eeee50" font-family="Liberation Sans" text-anchor="middle" transform="rotate(180 449.2 311.1)">6</text>
<text x="444.5" y="364.9" font-size="9.8" font-weight="700" fill="#eeee50" font-family="Liberation Sans" textLength="16" lengthAdjust="spacingAndGlyphs">Vin</text>
<text x="444.5" y="393.9" font-size="9.8" font-weight="700" fill="#eeee50" font-family="Liberation Sans" textLength="16" lengthAdjust="spacingAndGlyphs">GND</text>
<text x="444.5" y="422.9" font-size="9.8" font-weight="700" fill="#eeee50" font-family="Liberation Sans" textLength="16" lengthAdjust="spacingAndGlyphs">+5v</text>
<path d="M587,368 L587,381 L590,378 L593,384 L595,383 L592,377 L596.5,377 Z" fill="#f0f0f0" stroke="#555" stroke-width="0.6"/>
</g>
  <!-- info box -->
  <g id="info">
<rect x="5" y="18" width="167.4" height="54.6" fill="#15181b"/>
<rect x="5" y="19.4" width="167.4" height="53.2" fill="url(#ig)"/>
<rect x="5" y="19.4" width="30" height="53.2" fill="#9ab8c8" opacity="0.13"/>
<text x="10.5" y="31.7" font-size="10.4" font-weight="700" fill="#e6e3cc" stroke="#e6e3cc" stroke-width="0.3" textLength="8.9" lengthAdjust="spacingAndGlyphs">x:</text>
<text x="27.1" y="31.7" font-size="10.4" font-weight="700" fill="#e6e3cc" stroke="#e6e3cc" stroke-width="0.3" textLength="44.9" lengthAdjust="spacingAndGlyphs">2735.000</text>
<text x="81.5" y="31.7" font-size="10.4" font-weight="700" fill="#e6e3cc" stroke="#e6e3cc" stroke-width="0.3" textLength="16.3" lengthAdjust="spacingAndGlyphs">dx:</text>
<text x="104.3" y="31.7" font-size="10.4" font-weight="700" fill="#e6e3cc" stroke="#e6e3cc" stroke-width="0.3" textLength="44.9" lengthAdjust="spacingAndGlyphs">2735.000</text>
<text x="153.1" y="31.7" font-size="10.4" font-weight="700" fill="#e6e3cc" stroke="#e6e3cc" stroke-width="0.3" textLength="15.7" lengthAdjust="spacingAndGlyphs">mil</text>
<text x="10.5" y="42.9" font-size="10.4" font-weight="700" fill="#e6e3cc" stroke="#e6e3cc" stroke-width="0.3" textLength="8.9" lengthAdjust="spacingAndGlyphs">y:</text>
<text x="27.7" y="42.9" font-size="10.4" font-weight="700" fill="#e6e3cc" stroke="#e6e3cc" stroke-width="0.3" textLength="44.3" lengthAdjust="spacingAndGlyphs">1985.000</text>
<text x="81.5" y="42.9" font-size="10.4" font-weight="700" fill="#e6e3cc" stroke="#e6e3cc" stroke-width="0.3" textLength="16.3" lengthAdjust="spacingAndGlyphs">dy:</text>
<text x="104.3" y="42.9" font-size="10.4" font-weight="700" fill="#e6e3cc" stroke="#e6e3cc" stroke-width="0.3" textLength="44.9" lengthAdjust="spacingAndGlyphs">1985.000</text>
<text x="153.1" y="42.9" font-size="10.4" font-weight="700" fill="#e6e3cc" stroke="#e6e3cc" stroke-width="0.3" textLength="15.7" lengthAdjust="spacingAndGlyphs">mil</text>
<text x="11.1" y="57.3" font-size="13.2" font-weight="700" fill="#f0ea3a" stroke="#f0ea3a" stroke-width="0.3" textLength="61.9" lengthAdjust="spacingAndGlyphs">Top Layer</text>
<text x="10.5" y="68.4" font-size="8.6" font-weight="700" fill="#d8dcd8" stroke="#d8dcd8" stroke-width="0.3" textLength="124.5" lengthAdjust="spacingAndGlyphs">Snap: 5mil Hotspot Snap: 8mil</text>
</g>
  <!-- toolbar -->
  <g id="tb">
<rect x="260.6" y="20.9" width="303.2" height="20.5" rx="3.5" fill="#585858"/>
<line x1="370.3" y1="23" x2="370.3" y2="39.5" stroke="#3e3e3e" stroke-width="1"/>
<path d="M270.3,27.4 L279.1,27.4 L279.1,29 L276,31.8 L276,35 L273.4,35 L273.4,31.8 L270.3,29Z" fill="#dbe9f2"/>
<path d="M294,29 L297,29 A3.3,3.3 0 0 1 297,35.6 L294,35.6" fill="none" stroke="#e05060" stroke-width="2"/>
<path d="M294.5,29 L297,29 A3.3,3.3 0 0 1 300.3,32.3" fill="none" stroke="#d8d8ff" stroke-width="2"/>
<rect x="290.8" y="28" width="2" height="2" fill="#e8e8e8"/><rect x="290.8" y="31.3" width="2" height="2" fill="#e8e8e8"/><rect x="290.8" y="34.6" width="2" height="2" fill="#e8e8e8"/>
<path d="M317.2,26.8 L317.2,36.2 M313,31.5 L321.3,31.5" stroke="#7c7c7c" stroke-width="1.2"/>
<rect x="333.5" y="27.3" width="9" height="9" fill="none" stroke="#7d7aa8" stroke-width="1.2"/>
<path d="M355,30 h2.5 v5.6 h-2.5Z M358,28 h2.5 v7.6 h-2.5Z M361,30.5 h2.3 v5.1 h-2.3Z" fill="#8e8e8e"/>
<rect x="376.3" y="27.7" width="9" height="8" rx="1" fill="#8e8e8e"/>
<path d="M398.5,35.3 L405.8,28.2" stroke="#8e8e8e" stroke-width="1.1"/><circle cx="398.5" cy="35.3" r="1.4" fill="none" stroke="#8e8e8e" stroke-width="1"/><circle cx="405.8" cy="28.2" r="1.4" fill="none" stroke="#8e8e8e" stroke-width="1"/><path d="M397.5,30 L397.5,27.5 L401,27.5" fill="none" stroke="#8e8e8e" stroke-width="1"/>
<path d="M418,35 C418,29 420,28 421,31 C422,34 423,34 424,30 C425,27 428,28 428.5,34" fill="none" stroke="#808080" stroke-width="1.2"/>
<circle cx="442.6" cy="30.8" r="2.7" fill="none" stroke="#9a9a9a" stroke-width="1.8"/><path d="M442.6,33.5 L442.6,36.7 M445.3,30.8 L449.9,30.8" stroke="#9a9a9a" stroke-width="1.5"/>
<path d="M459.9,31 L464,31 L464,28 L470.4,28 L470.4,35.6 L459.9,35.6Z" fill="#a0a0a0"/>
<rect x="481.5" y="26.7" width="10.2" height="9.7" fill="none" stroke="#8c8c8c" stroke-width="1.1"/><path d="M483.5,34.5 L489.8,28.5" stroke="#8c8c8c" stroke-width="1"/>
<path d="M503.2,28 L503.2,36 L512.2,36 L512.2,28" fill="none" stroke="#8a8a8a" stroke-width="1"/><text x="507.7" y="34.2" font-size="5.5" fill="#8a8a8a" text-anchor="middle">[::]</text>
<text x="529" y="36.7" font-size="12" style="font-family:'Liberation Serif',serif" fill="#9a9a9a" text-anchor="middle">A</text>
<path d="M545.5,36 L554,27.6" stroke="#8c8c8c" stroke-width="1.2"/>
<path d="M327,37.5 L327,41.2 L323.3,41.2Z" fill="#e6e6e6"/>
<path d="M348,37.5 L348,41.2 L344.3,41.2Z" fill="#e6e6e6"/>
<path d="M369,37.5 L369,41.2 L365.3,41.2Z" fill="#e6e6e6"/>
<path d="M390.5,37.5 L390.5,41.2 L386.8,41.2Z" fill="#e6e6e6"/>
<path d="M411.5,37.5 L411.5,41.2 L407.8,41.2Z" fill="#e6e6e6"/>
<path d="M432.5,37.5 L432.5,41.2 L428.8,41.2Z" fill="#e6e6e6"/>
<path d="M454,37.5 L454,41.2 L450.3,41.2Z" fill="#e6e6e6"/>
<path d="M475,37.5 L475,41.2 L471.3,41.2Z" fill="#e6e6e6"/>
<path d="M496,37.5 L496,41.2 L492.3,41.2Z" fill="#e6e6e6"/>
<path d="M517,37.5 L517,41.2 L513.3,41.2Z" fill="#e6e6e6"/>
<path d="M559,37.5 L559,41.2 L555.3,41.2Z" fill="#e6e6e6"/>
</g>
</svg>
</body></html>
